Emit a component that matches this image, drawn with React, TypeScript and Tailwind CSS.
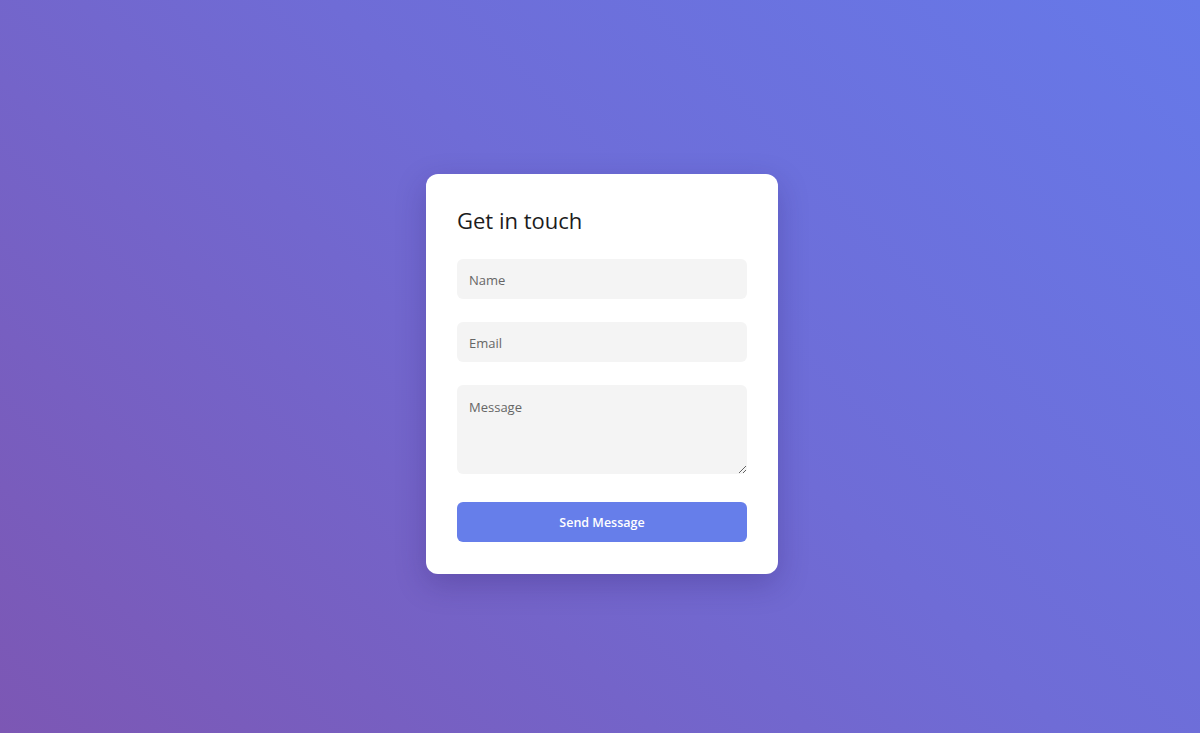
export default function App() {
  return (
    <div className="min-h-screen w-full flex items-center justify-center pt-[14px] pl-[4px] bg-[linear-gradient(45deg,#7c57b4_0%,#6f6cd6_55%,#6679e9_100%)] font-['Open_Sans','Noto_Sans',sans-serif]">
      <div className="w-[352px] bg-white rounded-xl px-[31px] pt-[32px] pb-[32px] shadow-[0_10px_30px_rgba(40,20,90,0.25)]">
        <h1 className="text-[22px] leading-[29px] font-medium text-[#1c1c1c] mb-[24px]">
          Get in touch
        </h1>
        <form className="flex flex-col" onSubmit={(e) => e.preventDefault()}>
          <input
            type="text"
            placeholder="Name"
            className="block w-full h-[40px] rounded-md bg-[#f4f4f4] px-3 pt-[3px] text-[13px] text-[#333] placeholder:text-[#666] outline-none mb-[23px]"
          />
          <input
            type="email"
            placeholder="Email"
            className="block w-full h-[40px] rounded-md bg-[#f4f4f4] px-3 pt-[3px] text-[13px] text-[#333] placeholder:text-[#666] outline-none mb-[23px]"
          />
          <textarea
            placeholder="Message"
            className="block w-full h-[89px] rounded-md bg-[#f4f4f4] px-3 py-[13px] text-[13px] leading-[18px] text-[#333] placeholder:text-[#666] outline-none mb-[28px]"
          />
          <button
            type="submit"
            className="w-full h-[40px] rounded-md bg-[#667eea] pt-[3px] text-white text-[12.5px] font-semibold"
          >
            Send Message
          </button>
        </form>
      </div>
    </div>
  );
}
